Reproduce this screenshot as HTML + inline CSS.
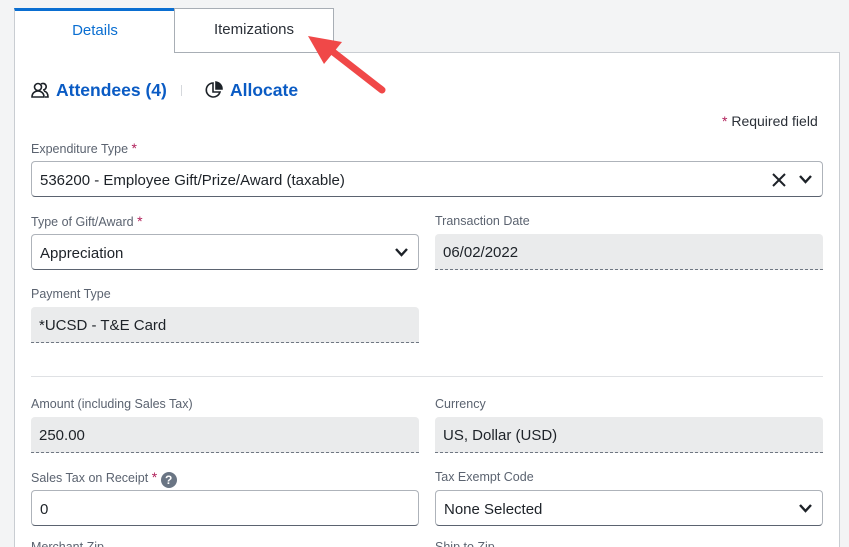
<!DOCTYPE html>
<html><head><style>
*{box-sizing:border-box;margin:0;padding:0}
html,body{width:849px;height:547px;overflow:hidden}
body{background:#f3f4f5;font-family:"Liberation Sans",sans-serif;position:relative}
.a{position:absolute}
.panel{left:14px;top:52px;width:826px;height:500px;background:#fff;border:1px solid #c9cdd2}
.lbl{position:absolute;font-size:12.5px;color:#5b6370;white-space:nowrap}
.req{color:#b0205a;font-size:14px}
.in{position:absolute;height:36px;border-radius:4px;font-size:15px;color:#1d2228;padding:2px 8px 0;display:flex;align-items:center;white-space:nowrap}
.ed{background:#fff;border:1px solid #aeb3ba;border-bottom:1px solid #5b6370}
.ro{background:#eaebec;border-bottom:1px dashed #6f7782;border-radius:4px 4px 0 0}
.chev{position:absolute;right:10px;top:13px}
</style></head><body>
<div class="a panel"></div>
<div class="a" style="left:14px;top:8px;width:161px;height:46px;background:#fff;border-top:3px solid #0a6ed1;border-left:1px solid #c9cdd2;text-align:center;line-height:40px;font-size:15px;color:#0a6ed1">Details</div>
<div class="a" style="left:174px;top:8px;width:160px;height:45px;background:#fff;border:1px solid #a8aeb5;text-align:center;line-height:42px;font-size:15px;color:#2b3038">Itemizations</div>
<svg class="a" style="left:300px;top:30px" width="95" height="70"><line x1="82" y1="60" x2="28" y2="18" stroke="#f04848" stroke-width="7" stroke-linecap="round"/><polygon points="8,6 42,12 24,34" fill="#f04848"/></svg>
<svg class="a" style="left:31px;top:81px" width="18" height="18" fill="none" stroke="#1d2228" stroke-width="1.6"><circle cx="7" cy="6" r="3.5"/><path d="M1 16c0-4 3-6 6-6s6 2 6 6z"/><path d="M10 3a3.3 3.3 0 1 1 2 6M13 10c2 .5 4 2 4 6h-3"/></svg>
<div class="a" style="left:56px;top:80px;font-size:17.5px;font-weight:bold;color:#0a5bc4">Attendees (4)</div>
<div class="a" style="left:181px;top:85px;width:1px;height:11px;background:#d5d8dc"></div>
<svg class="a" style="left:205px;top:81px" width="18" height="18" fill="none" stroke="#1d2228" stroke-width="1.6"><path d="M8 2a7 7 0 1 0 7 9H8z"/><path d="M11 1v7h6A7 7 0 0 0 11 1z" fill="#1d2228"/></svg>
<div class="a" style="left:230px;top:80px;font-size:17.5px;font-weight:bold;color:#0a5bc4">Allocate</div>
<div class="a" style="left:722px;top:113px;font-size:14px;color:#2b3038"><span class="req">*</span> Required field</div>

<div class="lbl" style="left:31px;top:140px">Expenditure Type <span class="req">*</span></div>
<div class="in ed" style="left:31px;top:161px;width:792px">536200 - Employee Gift/Prize/Award (taxable)
<svg class="a" style="right:36px;top:11px" width="14" height="14" stroke="#1d2228" stroke-width="2"><path d="M1 1l12 12M13 1L1 13"/></svg>
<svg class="chev" width="13" height="9" fill="none" stroke="#1d2228" stroke-width="2.4"><path d="M1 1l5.5 6L12 1"/></svg></div>

<div class="lbl" style="left:31px;top:213px">Type of Gift/Award <span class="req">*</span></div>
<div class="in ed" style="left:31px;top:234px;width:388px">Appreciation<svg class="chev" width="13" height="9" fill="none" stroke="#1d2228" stroke-width="2.4"><path d="M1 1l5.5 6L12 1"/></svg></div>
<div class="lbl" style="left:435px;top:214px">Transaction Date</div>
<div class="in ro" style="left:435px;top:234px;width:388px">06/02/2022</div>

<div class="lbl" style="left:31px;top:287px">Payment Type</div>
<div class="in ro" style="left:31px;top:307px;width:388px">*UCSD - T&amp;E Card</div>

<div class="a" style="left:31px;top:376px;width:792px;height:1px;background:#dfe1e4"></div>

<div class="lbl" style="left:31px;top:397px">Amount (including Sales Tax)</div>
<div class="in ro" style="left:31px;top:417px;width:388px">250.00</div>
<div class="lbl" style="left:435px;top:397px">Currency</div>
<div class="in ro" style="left:435px;top:417px;width:388px">US, Dollar (USD)</div>

<div class="lbl" style="left:31px;top:469px">Sales Tax on Receipt <span class="req">*</span> <span style="display:inline-block;width:16px;height:16px;border-radius:50%;background:#6a7584;color:#fff;font-size:12px;font-weight:bold;text-align:center;line-height:16px;vertical-align:-2px">?</span></div>
<div class="in ed" style="left:31px;top:490px;width:388px">0</div>
<div class="lbl" style="left:435px;top:470px">Tax Exempt Code</div>
<div class="in ed" style="left:435px;top:490px;width:388px">None Selected<svg class="chev" width="13" height="9" fill="none" stroke="#1d2228" stroke-width="2.4"><path d="M1 1l5.5 6L12 1"/></svg></div>

<div class="lbl" style="left:31px;top:540px">Merchant Zip</div>
<div class="lbl" style="left:435px;top:540px">Ship to Zip</div>
</body></html>
